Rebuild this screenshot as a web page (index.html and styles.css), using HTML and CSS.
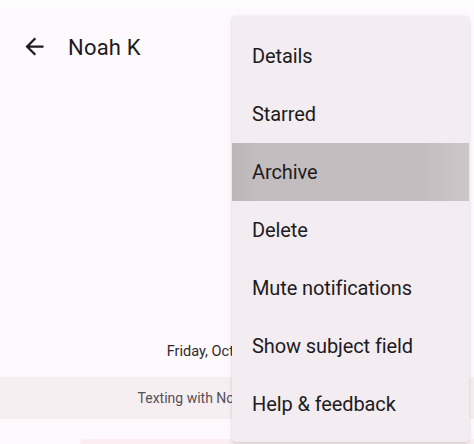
FILE: index.html
```html
<!DOCTYPE html>
<html>
<head>
<meta charset="utf-8">
<link rel="stylesheet" href="styles.css">
</head>
<body>
<div class="screen">
  <div class="statusbar"></div>
  <header class="topbar">
    <svg class="back" width="24" height="24" viewBox="0 0 24 24"><path d="M20 11H7.83l5.59-5.59L12 4l-8 8 8 8 1.41-1.41L7.83 13H20v-2z" fill="#1d1b1e"/></svg>
    <span class="title">Noah K</span>
  </header>
  <main class="thread">
    <div class="date">Friday, Oct 13 • 9:41 PM</div>
    <div class="notice">Texting with Noah K (SMS/MMS)</div>
    <div class="spacer"></div>
    <div class="composer"></div>
  </main>
  <ul class="menu">
    <li class="item">Details</li>
    <li class="item">Starred</li>
    <li class="item active">Archive</li>
    <li class="item">Delete</li>
    <li class="item">Mute notifications</li>
    <li class="item">Show subject field</li>
    <li class="item">Help &amp; feedback</li>
  </ul>
</div>
</body>
</html>
```
FILE: styles.css
```css
html, body {
  margin: 0;
  padding: 0;
}
body {
  width: 474px;
  height: 444px;
  overflow: hidden;
  background: #fdf9fc;
  font-family: Roboto, "Noto Sans", sans-serif;
  color: #1d1b1e;
}
.screen {
  position: relative;
  width: 474px;
  height: 444px;
  display: flex;
  flex-direction: column;
}
.screen > *, .thread > * {
  flex-shrink: 0;
}
.statusbar {
  height: 8px;
  background: #fefdfe;
}
.topbar {
  height: 76px;
  display: flex;
  align-items: center;
  padding-left: 21px;
  gap: 20px;
}
.back {
  width: 27px;
  height: 27px;
}
.title {
  font-size: 22px;
  letter-spacing: 0.2px;
  margin-top: 2px;
}
.thread {
  flex: 1;
  display: flex;
  flex-direction: column;
}
.date {
  margin-top: 258px;
  text-align: center;
  font-size: 14.5px;
  font-weight: 400;
  color: #2e2b2f;
  height: 20px;
  line-height: 20px;
  padding-left: 12px;
}
.notice {
  margin-top: 15px;
  height: 42px;
  line-height: 42px;
  background: #f7eef2;
  text-align: center;
  font-size: 14px;
  color: #545155;
  padding-left: 6px;
}
.spacer {
  height: 20px;
}
.composer {
  margin-left: 80px;
  height: 5px;
  border-radius: 8px 0 0 0;
  background: #fbeef3;
}
.menu {
  position: absolute;
  left: 232px;
  top: 16px;
  width: 237px;
  margin: 0;
  padding: 11px 0 9px;
  list-style: none;
  background: #f3edf1;
  border-radius: 4px;
  box-shadow: 0 1px 3px rgba(0,0,0,0.12), 0 2px 6px rgba(0,0,0,0.06);
}
.item {
  height: 58px;
  line-height: 58px;
  padding-left: 20px;
  font-size: 20px;
  letter-spacing: -0.1px;
  color: #1d1b1e;
  white-space: nowrap;
}
.item.active {
  background: linear-gradient(90deg, #bcb6b9 0%, #c3bdc0 12%, #c3bdc0 78%, #ccc6c9 100%);
}
```
